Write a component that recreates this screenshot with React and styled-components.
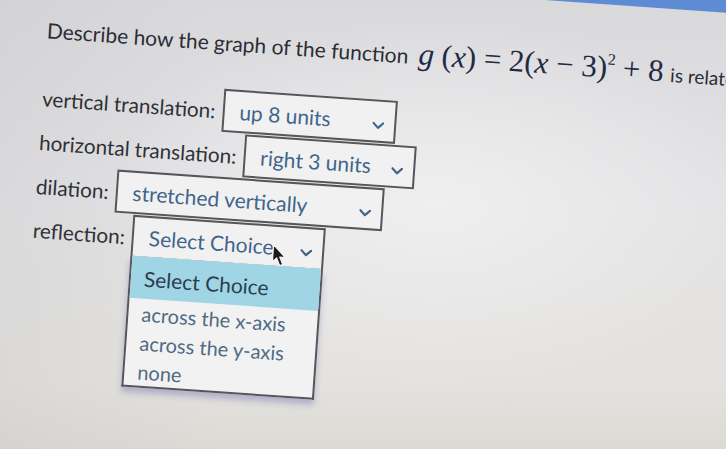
import React from 'react';
import styled, { createGlobalStyle } from 'styled-components';

const GlobalStyle = createGlobalStyle`
  html, body {
    margin: 0;
    padding: 0;
    width: 726px;
    height: 449px;
    overflow: hidden;
  }
  body {
    background:
      radial-gradient(ellipse 60% 55% at 60% 45%, rgba(240, 240, 241, 0.9), rgba(240, 240, 241, 0) 75%),
      linear-gradient(90deg, rgba(200, 200, 202, 0.35), rgba(200, 200, 202, 0) 30%),
      linear-gradient(180deg, #d9d8da 0%, #e3e3e5 45%, #e4e2de 85%, #dcdad5 100%);
    font-family: Lato, "Liberation Sans", sans-serif;
  }
`;

// the photo is taken at a slight angle, so the whole sheet is turned a little
const Sheet = styled.div`
  width: 1000px;
  margin-top: -100px;
  transform-origin: 0 100px;
  transform: rotate(4deg);
`;

const Header = styled.div`
  height: 62px;
  background: #5d8cd4;
`;

const Content = styled.div`
  padding: 45px 0 0 49px;
`;

const Question = styled.div`
  display: flex;
  align-items: baseline;
  white-space: nowrap;
  height: 44px;
  margin-bottom: 22px;
  color: #2b2d36;
  font-size: 21px;
`;

const Math = styled.span`
  font-family: "Liberation Serif", "DejaVu Serif", serif;
  font-size: 31px;
  color: #1f2a45;
  margin: 0 7px 0 10px;

  i {
    font-style: italic;
  }

  sup {
    font-size: 16px;
    vertical-align: 13px;
    line-height: 0;
  }
`;

const Tail = styled.span`
  font-size: 19px;
`;

const Row = styled.div`
  display: flex;
  align-items: baseline;
  margin-bottom: 1px;
`;

const Label = styled.span`
  font-size: 20.7px;
  color: #2f3035;
  margin-right: 7px;
`;

const Select = styled.div`
  position: relative;
  display: flex;
  align-items: center;
  justify-content: space-between;
  box-sizing: border-box;
  width: ${p => p.w}px;
  height: 43px;
  padding: 0 10px 0 15px;
  border: 2px solid #55555a;
  background: #f1f1f2;
  color: #40658a;
  font-size: 21px;
`;

const Chevron = styled.svg`
  width: 12px;
  height: 8px;
  margin-top: 8px;
  flex-shrink: 0;
`;

const Menu = styled.div`
  position: absolute;
  left: -2px;
  right: -2px;
  top: 100%;
  border: 2px solid #55555a;
  border-top: none;
  background: #f2f2f3;
  box-shadow: 0 5px 6px rgba(80, 86, 170, 0.35);
`;

const Option = styled.div`
  display: flex;
  align-items: center;
  height: ${p => (p.active ? 42 : 29)}px;
  padding-left: 13px;
  background: ${p => (p.active ? '#a0d5e6' : 'transparent')};
  color: ${p => (p.active ? '#2b3d50' : '#4f6b82')};
  font-size: ${p => (p.active ? 21 : 20)}px;
`;

const Cursor = styled.svg`
  position: absolute;
  left: 139px;
  top: 17px;
  width: 15px;
  height: 24px;
`;

const rows = [
  { label: 'vertical translation:', value: 'up 8 units', w: 174 },
  { label: 'horizontal translation:', value: 'right 3 units', w: 172 },
  { label: 'dilation:', value: 'stretched vertically', w: 268 },
  { label: 'reflection:', value: 'Select Choice', w: 193, open: true },
];

const options = ['Select Choice', 'across the x-axis', 'across the y-axis', 'none'];

const ChevronIcon = () => (
  <Chevron viewBox="0 0 12 8">
    <path d="M1.2 1.5 L6 6.2 L10.8 1.5" fill="none" stroke="#40658a" strokeWidth="2.2" strokeLinecap="round" strokeLinejoin="round" />
  </Chevron>
);

export default function App() {
  return (
    <>
      <GlobalStyle />
      <Sheet>
        <Header />
        <Content>
          <Question>
            Describe how the graph of the function
            <Math>
              <i>g</i> (<i>x</i>) = 2(<i>x</i> − 3)<sup>2</sup> + 8
            </Math>
            <Tail>is related to the graph of its parent function.</Tail>
          </Question>

          {rows.map(r => (
            <Row key={r.label}>
              <Label>{r.label}</Label>
              <Select w={r.w}>
                <span>{r.value}</span>
                <ChevronIcon />
                {r.open && (
                  <>
                    <Menu>
                      {options.map((o, i) => (
                        <Option key={o} active={i === 0}>{o}</Option>
                      ))}
                    </Menu>
                    <Cursor viewBox="0 0 15 24">
                      <path d="M1 1 L1 18 L5 14 L8.5 21.5 L11.5 20.2 L8 13 L13.5 13 Z" fill="#1a1a1a" stroke="#f4f4f4" strokeWidth="1.2" strokeLinejoin="round" />
                    </Cursor>
                  </>
                )}
              </Select>
            </Row>
          ))}
        </Content>
      </Sheet>
    </>
  );
}
